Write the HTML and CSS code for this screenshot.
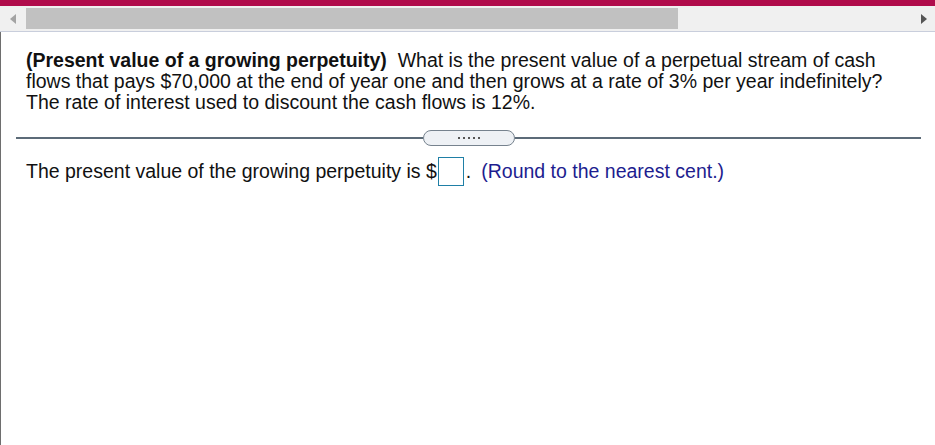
FILE: index.html
```html
<!DOCTYPE html>
<html>
<head>
<meta charset="utf-8">
<link rel="stylesheet" href="styles.css">
</head>
<body>
<div class="topbar"></div>
<div class="hscroll">
  <span class="arrow arrow-left"></span>
  <div class="track"><div class="thumb"></div></div>
  <span class="arrow arrow-right"></span>
</div>
<div class="content">
  <p class="question"><b>(Present value of a growing perpetuity)</b>&nbsp; What is the present value of a perpetual stream of cash flows that pays $70,000 at the end of year one and then grows at a rate of 3% per year indefinitely? The rate of interest used to discount the cash flows is 12%.</p>
  <div class="sep">
    <div class="rule"></div>
    <div class="pill"><span></span><span></span><span></span><span></span><span></span></div>
    <div class="rule"></div>
  </div>
  <div class="answer">
    <span>The present value of the growing perpetuity is $</span><span class="box"></span><span class="dot">.</span><span class="hint">(Round to the nearest cent.)</span>
  </div>
</div>
</body>
</html>
```
FILE: styles.css
```css
html, body {
  margin: 0;
  padding: 0;
  background: #fff;
  font-family: "Liberation Sans", Arial, sans-serif;
  color: #111;
}
.topbar {
  height: 6px;
  background: #b00b4b;
}
.hscroll {
  height: 25px;
  background: #f0f0f0;
  display: flex;
  align-items: center;
  border-bottom: 1px solid #c9cedc;
}
.arrow {
  width: 0;
  height: 0;
  border-top: 5px solid transparent;
  border-bottom: 5px solid transparent;
}
.arrow-left {
  margin-left: 10px;
  border-right: 6px solid #a3a3a3;
}
.arrow-right {
  margin-left: 243px;
  border-left: 6px solid #555;
}
.track {
  margin-left: 10px;
  width: 652px;
  height: 21px;
  display: flex;
}
.thumb {
  flex: 1;
  background: #c1c1c1;
}
.content {
  border-left: 1px solid #6e6e6e;
  height: 413px;
  box-sizing: border-box;
  padding-top: 18px;
}
.question {
  margin: 0 0 0 25px;
  width: 866px;
  font-size: 19.5px;
  line-height: 21px;
}
.sep {
  margin: 17px 14px 0 15px;
  display: flex;
  align-items: center;
  height: 16px;
}
.rule {
  flex: 1;
  height: 1.5px;
  background: #5c6b78;
}
.pill {
  width: 90px;
  height: 14px;
  border: 1px solid #76828e;
  border-radius: 8px;
  background: #eef1f5;
  display: flex;
  align-items: center;
  justify-content: center;
  gap: 3px;
}
.pill span {
  width: 2px;
  height: 2px;
  background: #555;
}
.answer {
  margin: 11px 0 0 25px;
  display: flex;
  align-items: center;
  font-size: 19.5px;
  line-height: 21px;
}
.box {
  width: 24px;
  height: 27px;
  border: 1px solid #1f7fa6;
  margin-left: 1px;
  margin-right: 2px;
}
.dot {
  margin-right: 10px;
}
.hint {
  color: #1d1d8f;
}
```
